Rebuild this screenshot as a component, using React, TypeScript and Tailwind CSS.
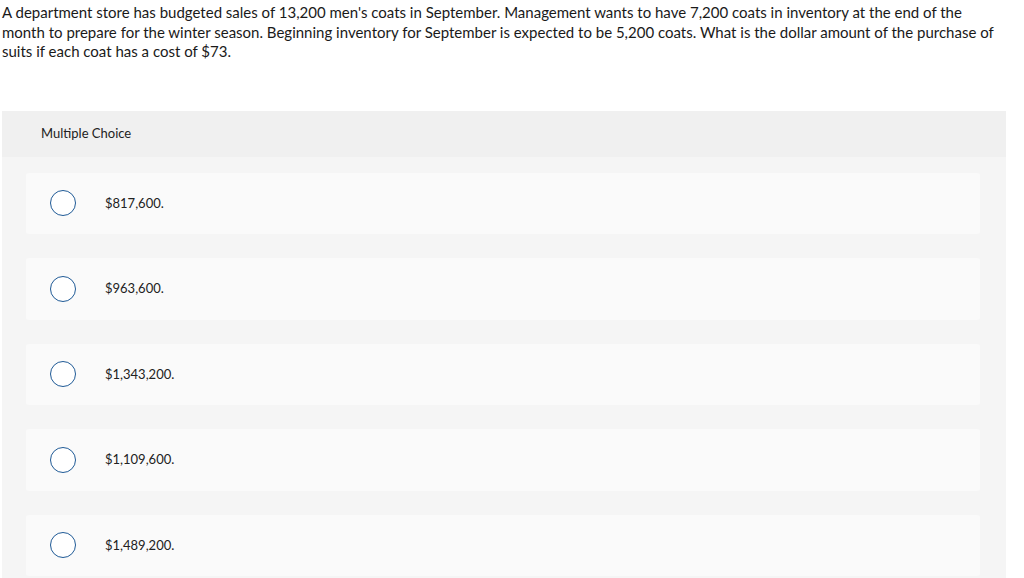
const choices = ["$817,600.", "$963,600.", "$1,343,200.", "$1,109,600.", "$1,489,200."];

function Choice({ label }: { label: string }) {
  return (
    <div className="flex h-[61.5px] items-center rounded-[3px] bg-[#fafafa] pl-[24px]">
      <span className="h-[26px] w-[26px] shrink-0 rounded-full border-[1.5px] border-[#1f5a96] bg-white" />
      <span className="ml-[29px] text-[13px] text-[#222]">{label}</span>
    </div>
  );
}

export default function App() {
  return (
    <div className="min-h-[578px] bg-white font-['Lato','Liberation_Sans',sans-serif] text-[#222]">
      <p className="w-[1000px] px-[2px] pt-[3px] text-[15px] leading-[19.5px] text-[#1a1a1a]">
        A department store has budgeted sales of 13,200 men's coats in September. Management wants to have 7,200 coats
        in inventory at the end of the month to prepare for the winter season. Beginning inventory for September is
        expected to be 5,200 coats. What is the dollar amount of the purchase of suits if each coat has a cost of $73.
      </p>
      <div className="mx-[2px] mt-[49px] w-[1004px] rounded-t-[2px] bg-[#f5f5f5]">
        <div className="flex h-[46.5px] items-center bg-[#f0f0f0] pl-[39px] text-[13px] text-[#222]">Multiple Choice</div>
        <div className="flex flex-col gap-[24px] pl-[24px] pr-[26px] pt-[15.5px] pb-[16px]">
          {choices.map((c) => (
            <Choice key={c} label={c} />
          ))}
        </div>
      </div>
    </div>
  );
}
